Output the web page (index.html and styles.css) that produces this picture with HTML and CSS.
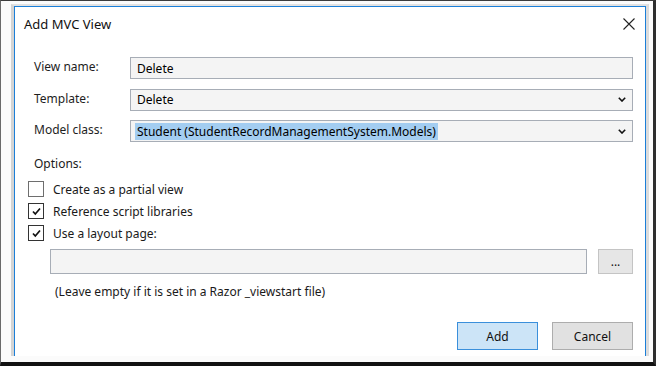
FILE: index.html
```html
<!DOCTYPE html>
<html lang="en">
<head>
    <meta charset="UTF-8">
    <meta name="viewport" content="width=device-width, initial-scale=1.0">
    <title>Add MVC View</title>
    <link rel="stylesheet" href="styles.css">
</head>
<body>
    <div class="frame">
        <div class="window">
            <div class="dialog">
                <div class="dialog-header">
                    <span class="dialog-title">Add MVC View</span>
                    <svg class="close-icon" width="12" height="12" viewBox="0 0 12 12">
                        <path d="M0.5 0.5 L11.5 11.5 M11.5 0.5 L0.5 11.5" stroke="#222" stroke-width="1.1" fill="none"/>
                    </svg>
                </div>

                <div class="form-grid">
                    <label class="field-label">View name:</label>
                    <div class="field-box">Delete</div>

                    <label class="field-label">Template:</label>
                    <div class="field-box field-select">
                        <span>Delete</span>
                        <svg class="chevron" width="8" height="5" viewBox="0 0 8 5">
                            <path d="M0.8 0.8 L4 4 L7.2 0.8" stroke="#111" stroke-width="1.6" fill="none"/>
                        </svg>
                    </div>

                    <label class="field-label">Model class:</label>
                    <div class="field-box field-select">
                        <span class="selected-text">Student (StudentRecordManagementSystem.Models)</span>
                        <svg class="chevron" width="8" height="5" viewBox="0 0 8 5">
                            <path d="M0.8 0.8 L4 4 L7.2 0.8" stroke="#111" stroke-width="1.6" fill="none"/>
                        </svg>
                    </div>
                </div>

                <div class="options-label">Options:</div>

                <div class="options-list">
                    <div class="option">
                        <span class="checkbox"></span>
                        <span>Create as a partial view</span>
                    </div>
                    <div class="option">
                        <span class="checkbox checked">
                            <svg width="11" height="11" viewBox="0 0 11 11">
                                <path d="M2 5.5 L4.3 8 L9 2.5" stroke="#111" stroke-width="1.7" fill="none"/>
                            </svg>
                        </span>
                        <span>Reference script libraries</span>
                    </div>
                    <div class="option">
                        <span class="checkbox checked">
                            <svg width="11" height="11" viewBox="0 0 11 11">
                                <path d="M2 5.5 L4.3 8 L9 2.5" stroke="#111" stroke-width="1.7" fill="none"/>
                            </svg>
                        </span>
                        <span>Use a layout page:</span>
                    </div>
                </div>

                <div class="layout-row">
                    <div class="field-box layout-path"></div>
                    <button class="btn btn-browse">...</button>
                </div>

                <p class="layout-note">(Leave empty if it is set in a Razor _viewstart file)</p>

                <div class="dialog-actions">
                    <button class="btn btn-primary">Add</button>
                    <button class="btn btn-secondary">Cancel</button>
                </div>
            </div>
        </div>
    </div>
</body>
</html>
```

FILE: styles.css
```css
* {
    margin: 0;
    padding: 0;
    box-sizing: border-box;
}

body {
    font-family: "Noto Sans", "Open Sans", sans-serif;
    font-size: 12px;
    color: #1a1a1a;
    background: #ffffff;
}

.frame {
    width: 656px;
    height: 366px;
    border-top: 1px solid #3c3c3c;
    border-left: 1px solid #6a6a6a;
    border-right: 3px solid #2e2e2e;
    border-bottom: 4px solid #111;
    padding: 3px 4px 0 10px;
    background: #fbfbfb;
}

.window {
    border-left: 3px solid #d4d4d4;
    border-top: 2px solid #e2e2e2;
    border-right: 3px solid #dcdcdc;
}

.dialog {
    height: 350px;
    background: #ffffff;
    border: 1px solid #1b7fd8;
    border-bottom: none;
    padding: 0 12px 0 19px;
}

.dialog-header {
    display: flex;
    align-items: center;
    justify-content: space-between;
    height: 34px;
    margin-left: -10px;
    margin-right: -2px;
}

.dialog-title {
    font-size: 13px;
    color: #111;
}

.form-grid {
    display: grid;
    grid-template-columns: 96px 1fr;
    grid-auto-rows: 22px;
    row-gap: 9.5px;
    align-items: center;
    margin-top: 16px;
}

.field-label {
    color: #1e1e1e;
    margin-top: -3px;
}

.field-box {
    height: 22px;
    border: 1px solid #a7adb6;
    background: #f4f4f4;
    padding: 0 6px;
    display: flex;
    align-items: center;
    color: #000;
}

.field-select {
    justify-content: space-between;
    padding-right: 6px;
}

.selected-text {
    background: #a3cdf1;
    margin-left: -2px;
    padding: 0 2px;
    line-height: 17px;
}

.options-label {
    margin-top: 12px;
    height: 20px;
    line-height: 20px;
}

.options-list {
    display: flex;
    flex-direction: column;
    gap: 6px;
    margin-top: 7px;
    margin-left: -6px;
}

.option {
    display: flex;
    align-items: center;
    gap: 9px;
    height: 16px;
}

.checkbox {
    width: 16px;
    height: 16px;
    border: 1px solid #6e6e6e;
    background: #fff;
    display: flex;
    align-items: center;
    justify-content: center;
}

.checkbox.checked {
    border-color: #333;
}

.layout-row {
    display: flex;
    gap: 11px;
    margin-top: 8px;
    margin-left: 16px;
}

.layout-path {
    flex: 1;
    height: 25px;
}

.btn {
    font-family: inherit;
    font-size: 12px;
    color: #111;
    cursor: pointer;
}

.btn-browse {
    width: 35px;
    height: 25px;
    background: #e6e6e6;
    border: 1px solid #c4c4c4;
    line-height: 14px;
}

.layout-note {
    margin-top: 10px;
    margin-left: 21px;
    line-height: 16px;
}

.dialog-actions {
    display: flex;
    justify-content: flex-end;
    gap: 14px;
    margin-top: 22px;
}

.btn-primary,
.btn-secondary {
    width: 81px;
    height: 28px;
}

.btn-primary {
    background: #cce4f7;
    border: 1px solid #3a8fdb;
}

.btn-secondary {
    background: #e1e1e1;
    border: 1px solid #adadad;
}
```
